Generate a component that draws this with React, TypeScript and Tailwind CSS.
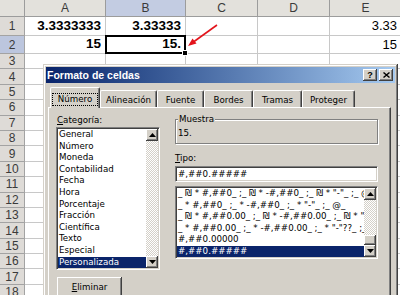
import React from "react";

const raised =
  "bg-[#d4d0c8] shadow-[inset_-1px_-1px_0_#404040,inset_1px_1px_0_#ffffff,inset_-2px_-2px_0_#808080,inset_2px_2px_0_#d4d0c8]";
const sunken =
  "border-t border-l border-t-[#808080] border-l-[#808080] border-b border-r border-b-white border-r-white shadow-[inset_1px_1px_0_#404040,inset_-1px_-1px_0_#d4d0c8] p-[1px] bg-white";
const track =
  "bg-[image:repeating-conic-gradient(#ffffff_0%_25%,#d4d0c8_0%_50%)] bg-[length:2px_2px]";

function HeadCell({ w, label, active }: { w: string; label: string; active?: boolean }) {
  return (
    <div
      className={`${w} shrink-0 flex items-center justify-center border-r border-b border-[#9c9c9c] text-[12px] text-[#3a3a3a] ${
        active ? "bg-[#c3cce2]" : "bg-[#e3e1dc]"
      }`}
    >
      {label}
    </div>
  );
}

function RowHead({ n, active }: { n: number; active?: boolean }) {
  return (
    <div
      className={`w-[25px] shrink-0 flex items-center justify-center border-r border-b border-[#a3a3a3] text-[12px] text-[#3a3a3a] ${
        active ? "bg-[#bcc6de]" : "bg-[#dedbd7]"
      }`}
    >
      {n}
    </div>
  );
}

function Cell({
  w,
  children,
  bold,
}: {
  w: string;
  children?: React.ReactNode;
  bold?: boolean;
}) {
  return (
    <div
      className={`${w} shrink-0 flex items-center justify-end overflow-hidden whitespace-nowrap border-r border-b border-[#c8c8c8] pr-[4px] ${
        bold ? "text-[13.5px] font-bold" : "text-[13px] pr-[3px]"
      } text-black`}
    >
      {children}
    </div>
  );
}

const below = [3, 4, 5, 6, 7, 8, 9, 10, 11, 12, 13, 14, 15, 16, 17, 18];

function Sheet() {
  return (
    <div className="flex flex-col">
      <div className="flex h-[17px]">
        <div className="w-[25px] shrink-0 border-r border-b border-[#9c9c9c] bg-[#e3e1dc]" />
        <HeadCell w="w-[81px]" label="A" />
        <HeadCell w="w-[80px]" label="B" active />
        <HeadCell w="w-[72px]" label="C" />
        <HeadCell w="w-[72px]" label="D" />
        <HeadCell w="w-[72px]" label="E" />
      </div>
      <div className="flex h-[19px]">
        <RowHead n={1} />
        <Cell w="w-[81px]" bold>
          3.3333333
        </Cell>
        <Cell w="w-[80px]" bold>
          3.33333
        </Cell>
        <Cell w="w-[72px]" />
        <Cell w="w-[72px]" />
        <Cell w="w-[72px]">3.33</Cell>
      </div>
      <div className="flex h-[18px]">
        <RowHead n={2} active />
        <Cell w="w-[81px]" bold>
          15
        </Cell>
        <div className="relative w-[80px] shrink-0 flex items-center justify-end border-r border-b border-[#c8c8c8] pr-[4px] text-[13.5px] font-bold text-black">
          15.
          <div className="absolute left-[-1px] top-[-1px] right-[-1px] bottom-[-1px] z-10 border-2 border-black" />
          <div className="absolute right-[-3px] bottom-[-3px] z-20 h-[6px] w-[6px] border border-white bg-black" />
        </div>
        <Cell w="w-[72px]" />
        <Cell w="w-[72px]" />
        <Cell w="w-[72px]">15</Cell>
      </div>
      {below.map((n) => (
        <div key={n} className="flex h-[15.4px]">
          <RowHead n={n} />
          <Cell w="w-[81px]" />
          <Cell w="w-[80px]" />
          <Cell w="w-[72px]" />
          <Cell w="w-[72px]" />
          <Cell w="w-[72px]" />
        </div>
      ))}
    </div>
  );
}

function ArrowBtn({ down }: { down?: boolean }) {
  return (
    <div className={`flex h-[12px] w-[12px] shrink-0 items-center justify-center ${raised}`}>
      <svg width="7" height="4" viewBox="0 0 7 4">
        <polygon points={down ? "0,0 7,0 3.5,4" : "3.5,0 7,4 0,4"} fill="#000000" />
      </svg>
    </div>
  );
}

const categories = [
  "General",
  "Número",
  "Moneda",
  "Contabilidad",
  "Fecha",
  "Hora",
  "Porcentaje",
  "Fracción",
  "Científica",
  "Texto",
  "Especial",
  "Personalizada",
];

const tipos = [
  '_ ₪ * #,##0_ ;_ ₪ * -#,##0_ ;_ ₪ * "-"_ ;_ @_ ',
  '_ * #,##0_ ;_ * -#,##0_ ;_ * "-"_ ;_ @_ ',
  '_ ₪ * #,##0.00_ ;_ ₪ * -#,##0.00_ ;_ ₪ * "-"??_ ;_ @_ ',
  '_ * #,##0.00_ ;_ * -#,##0.00_ ;_ * "-"??_ ;_ @_ ',
  "#,##0.00000",
  "#,##0.#####",
];

const tabs = [
  { label: "Alineación", w: "w-[57px]" },
  { label: "Fuente", w: "w-[47px]" },
  { label: "Bordes", w: "w-[49px]" },
  { label: "Tramas", w: "w-[49px]" },
  { label: "Proteger", w: "w-[53px]" },
];

function Dialog() {
  return (
    <div
      className={`absolute left-[43px] top-[64px] h-[240px] w-[355px] p-[3px] bg-[#d4d0c8] shadow-[inset_-1px_-1px_0_#404040,inset_1px_1px_0_#d4d0c8,inset_-2px_-2px_0_#808080,inset_2px_2px_0_#ffffff] font-['DejaVu_Sans',sans-serif] text-[8.7px] text-black`}
    >
      <div className="flex h-[16px] items-center justify-between bg-linear-to-r from-[#0a246a] to-[#a6caf0] pl-[1px] pr-[2px]">
        <span className="font-['Liberation_Sans',Arial,sans-serif] text-[10.5px] font-bold leading-none text-white">
          Formato de celdas
        </span>
        <div className="flex gap-[2px]">
          <div className={`flex h-[12px] w-[14px] items-center justify-center ${raised}`}>
            <span className="font-['Liberation_Sans',Arial,sans-serif] text-[9px] font-bold leading-none">?</span>
          </div>
          <div className={`flex h-[12px] w-[14px] items-center justify-center ${raised}`}>
            <svg width="7" height="6" viewBox="0 0 7 6">
              <path d="M0.5 0.5 L6.5 5.5 M6.5 0.5 L0.5 5.5" stroke="#000000" strokeWidth="1.4" />
            </svg>
          </div>
        </div>
      </div>

      <div className="mt-[4px] pl-[2px] pr-[4px]">
        <div className="relative z-10 flex h-[20px] items-end pl-[2px]">
          <div className="-mb-[1px] flex h-[21px] w-[50px] shrink-0 justify-center rounded-t-[2px] border-t border-l border-r border-t-white border-l-white border-r-[#404040] bg-[#d4d0c8] pt-[5px] shadow-[inset_-1px_0_0_#808080]">
            <span className="h-[13px] border border-dotted border-black px-[5px] leading-[11px]">Número</span>
          </div>
          {tabs.map((t) => (
            <div
              key={t.label}
              className={`${t.w} flex h-[17px] shrink-0 items-center justify-center rounded-t-[2px] border-t border-l border-r border-t-white border-l-white border-r-[#404040] bg-[#d4d0c8] pt-[2px] shadow-[inset_-1px_0_0_#808080]`}
            >
              <span className="leading-[11px]">{t.label}</span>
            </div>
          ))}
        </div>

        <div className="relative flex h-[200px] border-t border-l border-r border-b border-t-white border-l-white border-r-[#404040] border-b-[#404040] pl-[7px] shadow-[inset_-1px_-1px_0_#808080]">
          {/* left column */}
          <div className="flex w-[104px] shrink-0 flex-col pt-[6px]">
            <div className="h-[12px] pl-[1px] leading-[12px]">
              <span className="underline">C</span>ategoría:
            </div>
            <div className={`mt-[1px] flex h-[143px] ${sunken}`}>
              <div className="flex min-w-0 flex-1 flex-col">
                {categories.map((c, i) => (
                  <div
                    key={c}
                    className={`h-[11.6px] whitespace-nowrap pl-[1px] leading-[11.6px] ${
                      i === categories.length - 1 ? "bg-[#0a246a] text-white" : ""
                    }`}
                  >
                    {c}
                  </div>
                ))}
              </div>
              <div className="flex w-[12px] shrink-0 flex-col">
                <ArrowBtn />
                <div className={`flex-1 ${track}`} />
                <ArrowBtn down />
              </div>
            </div>
            <div className={`mt-[7px] ml-[1px] flex h-[23px] w-[65px] justify-center pt-[5px] ${raised}`}>
              <span className="leading-[11px]">
                <span className="underline">E</span>liminar
              </span>
            </div>
          </div>

          {/* right column */}
          <div className="ml-[15px] flex w-[203px] shrink-0 flex-col pt-[11px]">
            <div className="relative h-[25px] border border-[#808080] shadow-[inset_1px_1px_0_#ffffff,1px_1px_0_#ffffff]">
              <span className="absolute left-[2px] top-[-6px] bg-[#d4d0c8] px-[1px] leading-[11px]">Muestra</span>
              <div className="pl-[2px] pt-[8px] leading-[11px]">15.</div>
            </div>
            <div className="mt-[8px] h-[12px] leading-[12px]">
              <span className="underline">T</span>ipo:
            </div>
            <div className={`mt-[2px] h-[16px] ${sunken}`}>
              <div className="pl-[1px] leading-[12px]">#,##0.#####</div>
            </div>
            <div className={`mt-[4px] flex h-[73px] ${sunken}`}>
              <div className="flex min-w-0 flex-1 flex-col overflow-hidden">
                {tipos.map((t, i) => (
                  <div
                    key={i}
                    className={`h-[11.5px] overflow-hidden whitespace-pre pl-[1px] leading-[11.5px] ${
                      i === tipos.length - 1 ? "bg-[#0a246a] text-white" : ""
                    }`}
                  >
                    {t}
                  </div>
                ))}
              </div>
              <div className="flex w-[12px] shrink-0 flex-col">
                <ArrowBtn />
                <div className={`flex-1 ${track}`} />
                <div className={`h-[10px] shrink-0 ${raised}`} />
                <ArrowBtn down />
              </div>
            </div>
          </div>
        </div>
      </div>
    </div>
  );
}

function RedArrow() {
  return (
    <svg className="absolute left-[183px] top-[20px]" width="40" height="32" viewBox="0 0 40 32">
      <line x1="34" y1="5" x2="9" y2="23" stroke="#e3141c" strokeWidth="1.6" />
      <polygon points="5,26 13.5,23.5 9.5,18.5" fill="#e3141c" />
    </svg>
  );
}

export default function App() {
  return (
    <div className="relative h-[295px] w-[400px] overflow-hidden bg-white font-['Liberation_Sans',Arial,sans-serif]">
      <Sheet />
      <RedArrow />
      <Dialog />
    </div>
  );
}
